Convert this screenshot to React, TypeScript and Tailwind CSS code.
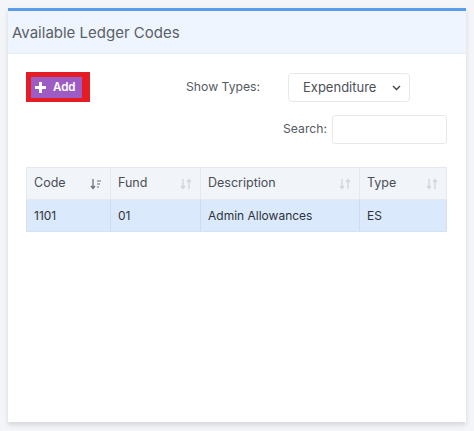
const SortIcon = ({ active }: { active?: boolean }) => (
  <svg width="12" height="12" viewBox="0 0 12 12" className={active ? "text-gray-500" : "text-gray-300"}>
    <path d="M3 1v9M1 8l2 2.5L5 8" stroke="currentColor" strokeWidth="1.3" fill="none" />
    {active ? (
      <path d="M7 3h4M7 6h3M7 9h2" stroke="currentColor" strokeWidth="1.2" />
    ) : (
      <path d="M9 11V2M7 4l2-2.5L11 4" stroke="currentColor" strokeWidth="1.3" fill="none" />
    )}
  </svg>
);

const columns = [
  { name: "Code", w: "w-[83px]", active: true },
  { name: "Fund", w: "w-[90px]" },
  { name: "Description", w: "w-[159px]" },
  { name: "Type", w: "flex-1" },
];

export default function App() {
  return (
    <div className="w-[474px] h-[431px] bg-[#f3f5f9] pt-2 px-2 font-['Inter',sans-serif]">
      <div className="h-[414px] bg-white border-t-[3px] border-[#5b9cea] shadow-[0_3px_5px_rgba(0,0,0,0.12)] flex flex-col">
        <div className="h-[43px] bg-[#eef5fe] border-b border-[#e6edf6] flex items-center px-1">
          <h2 className="text-[15px] text-[#5b5f66] leading-none">Available Ledger Codes</h2>
        </div>
        <div className="px-[18px] pt-[18px]">
          <div className="flex items-start">
            <div className="border-[5px] border-[#e41c24] bg-[#e41c24] w-[64px] h-[30px]">
              <button className="bg-[#9c5cc4] h-[21px] w-[51px] flex items-center pl-1 gap-[7px] text-white font-semibold text-[11.5px]">
                <svg width="11" height="11" viewBox="0 0 11 11">
                  <path d="M4 0h3v4h4v3H7v4H4V7H0V4h4z" fill="white" />
                </svg>
                Add
              </button>
            </div>
            <div className="ml-auto flex flex-col items-end mr-[1px]">
              <div className="flex items-center mt-[1px]">
                <span className="text-[12.2px] text-[#555a60] mr-[28px]">Show Types:</span>
                <div className="w-[122px] h-[29px] border border-[#e6e8eb] rounded-[4px] flex items-center pl-[14px] pr-2 text-[13px] text-[#4d5157] mr-[37px]">
                  Expenditure
                  <svg width="9" height="6" viewBox="0 0 9 6" className="ml-auto">
                    <path d="M1 1l3.5 3.5L8 1" stroke="#444" strokeWidth="1.4" fill="none" />
                  </svg>
                </div>
              </div>
              <div className="flex items-center mt-[13px]">
                <span className="text-[12.2px] text-[#555a60] mr-[5px]">Search:</span>
                <div className="w-[115px] h-[29px] border border-[#e6e8eb] rounded-[3px]" />
              </div>
            </div>
          </div>
          <div className="mt-[23px] w-[421px] text-[12px] text-[#2f3338]">
            <div className="flex h-[33px] bg-[#f1f4f9] border border-[#e4e9f0]">
              {columns.map((c, i) => (
                <div
                  key={c.name}
                  className={`${c.w} flex items-center justify-between pl-[7px] pr-2 ${i > 0 ? "border-l border-[#e4e9f0]" : ""}`}
                >
                  <span className="text-[#4a4e55] text-[12.5px]">{c.name}</span>
                  <SortIcon active={c.active} />
                </div>
              ))}
            </div>
            <div className="flex h-[32px] bg-[#dbe9fc] border-x border-b border-[#d5e2f2]">
              <div className="w-[83px] flex items-center pl-[7px]">1101</div>
              <div className="w-[90px] flex items-center pl-[7px] border-l border-[#cfdcec]">01</div>
              <div className="w-[159px] flex items-center pl-[7px] border-l border-[#cfdcec]">Admin Allowances</div>
              <div className="flex-1 flex items-center pl-[7px] border-l border-[#cfdcec]">ES</div>
            </div>
          </div>
        </div>
      </div>
    </div>
  );
}
